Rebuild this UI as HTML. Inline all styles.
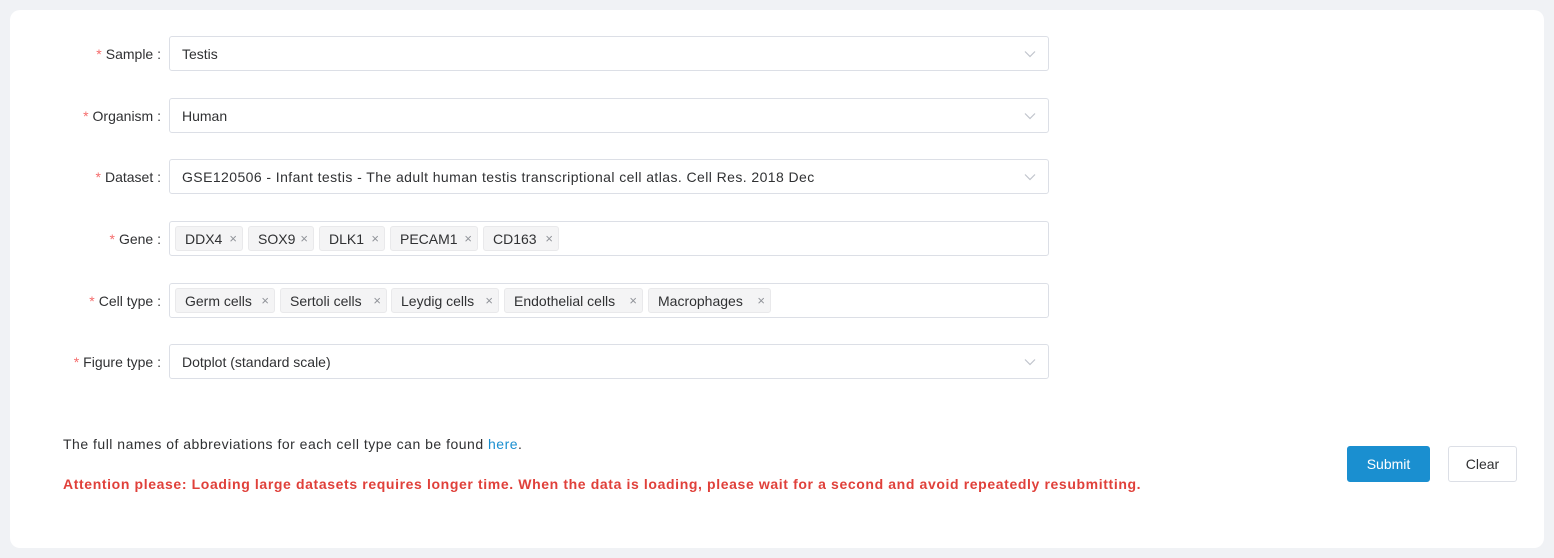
<!DOCTYPE html>
<html><head><meta charset="utf-8"><style>
*{box-sizing:border-box;margin:0;padding:0}
body{width:1554px;height:558px;background:#f0f2f5;font-family:"Liberation Sans",sans-serif;font-size:14px;color:#303133;position:relative;overflow:hidden}
.card{position:absolute;left:10px;top:10px;width:1534px;height:538px;background:#fff;border-radius:10px}
.lbl{position:absolute;right:1393px;width:150px;text-align:right;font-size:14px;line-height:37px;color:#303133;white-space:nowrap}
.lbl b{color:#f56c6c;font-weight:normal;margin-right:4px}
.inp{position:absolute;left:169px;width:880px;height:35px;border:1px solid #dcdfe6;border-radius:3px;background:#fff}
.inp .t{position:absolute;left:12px;top:0;line-height:35px;font-size:14px;color:#303133;white-space:nowrap}
.arr{position:absolute;right:12px;top:13px}
.tag{position:absolute;top:4px;height:25px;background:#f4f4f5;border:1px solid #e9e9eb;border-radius:3px;line-height:24px;padding-left:9px;color:#303133;font-size:14px;white-space:nowrap;overflow:hidden}
.tag i{font-style:normal;position:absolute;right:5px;color:#909399;font-size:13px}
.p1{position:absolute;left:63px;top:436px;font-size:14px;letter-spacing:0.5px;white-space:nowrap}
.p1 a{color:#1a8fd0;text-decoration:none}
.p2{position:absolute;left:63px;top:476px;font-size:14px;font-weight:bold;color:#e0403a;white-space:nowrap;letter-spacing:0.62px}
.btn{position:absolute;top:446px;height:36px;border-radius:3px;font-size:14px;line-height:34px;text-align:center}
</style></head><body>
<div class="card"></div>
<svg width="0" height="0" style="position:absolute"><defs><symbol id="a" viewBox="0 0 12 8"><path d="M1 1.5L6 6.5L11 1.5" fill="none" stroke="#c0c4cc" stroke-width="1.2"/></symbol></defs></svg>

<div class="lbl" style="top:36px"><b>*</b>Sample :</div>
<div class="inp" style="top:36px"><span class="t">Testis</span><svg class="arr" width="12" height="8"><use href="#a"/></svg></div>

<div class="lbl" style="top:98px"><b>*</b>Organism :</div>
<div class="inp" style="top:98px"><span class="t">Human</span><svg class="arr" width="12" height="8"><use href="#a"/></svg></div>

<div class="lbl" style="top:159px"><b>*</b>Dataset :</div>
<div class="inp" style="top:159px"><span class="t" style="letter-spacing:0.42px">GSE120506 - Infant testis - The adult human testis transcriptional cell atlas. Cell Res. 2018 Dec</span><svg class="arr" width="12" height="8"><use href="#a"/></svg></div>

<div class="lbl" style="top:221px"><b>*</b>Gene :</div>
<div class="inp" style="top:221px">
<span class="tag" style="left:5px;width:68px">DDX4<i>×</i></span>
<span class="tag" style="left:78px;width:66px">SOX9<i>×</i></span>
<span class="tag" style="left:149px;width:66px">DLK1<i>×</i></span>
<span class="tag" style="left:220px;width:88px">PECAM1<i>×</i></span>
<span class="tag" style="left:313px;width:76px">CD163<i>×</i></span>
</div>

<div class="lbl" style="top:283px"><b>*</b>Cell type :</div>
<div class="inp" style="top:283px">
<span class="tag" style="left:5px;width:100px">Germ cells<i>×</i></span>
<span class="tag" style="left:110px;width:107px">Sertoli cells<i>×</i></span>
<span class="tag" style="left:221px;width:108px">Leydig cells<i>×</i></span>
<span class="tag" style="left:334px;width:139px">Endothelial cells<i>×</i></span>
<span class="tag" style="left:478px;width:123px">Macrophages<i>×</i></span>
</div>

<div class="lbl" style="top:344px"><b>*</b>Figure type :</div>
<div class="inp" style="top:344px"><span class="t">Dotplot (standard scale)</span><svg class="arr" width="12" height="8"><use href="#a"/></svg></div>

<div class="p1">The full names of abbreviations for each cell type can be found <a>here</a>.</div>
<div class="p2">Attention please: Loading large datasets requires longer time. When the data is loading, please wait for a second and avoid repeatedly resubmitting.</div>

<div class="btn" style="left:1347px;width:83px;background:#1a8fd0;color:#fff;border:1px solid #1a8fd0">Submit</div>
<div class="btn" style="left:1448px;width:69px;background:#fff;color:#303133;border:1px solid #dcdfe6">Clear</div>
</body></html>
